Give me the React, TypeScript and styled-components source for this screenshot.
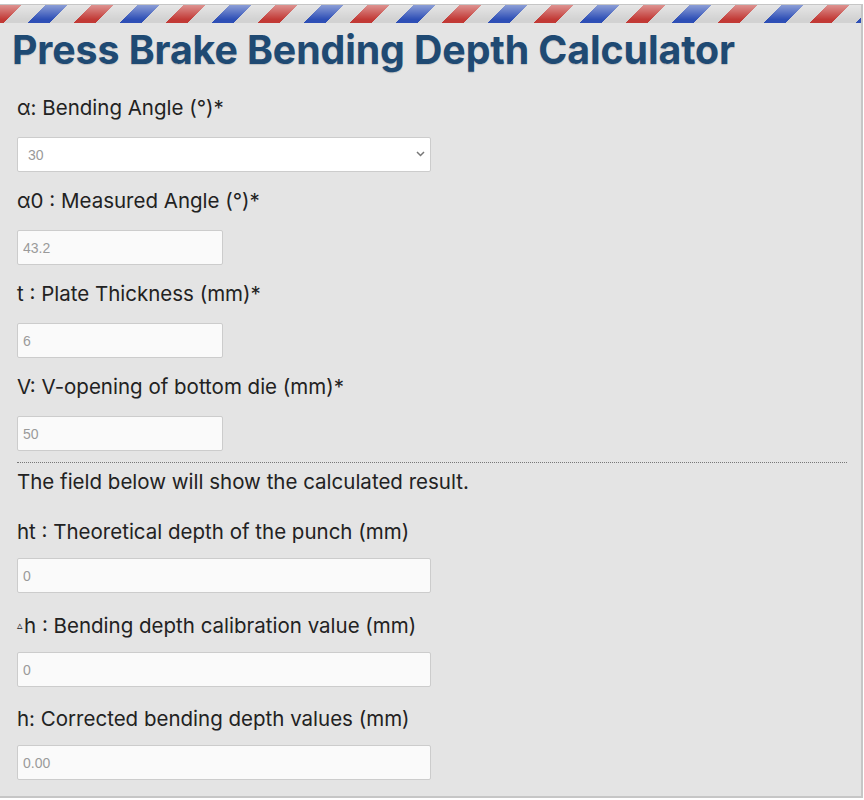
import React from "react";
import styled, { createGlobalStyle } from "styled-components";

const GlobalStyle = createGlobalStyle`
  html, body {
    margin: 0;
    padding: 0;
    background: #ffffff;
  }
  * {
    box-sizing: border-box;
  }
`;

const Calculator = styled.div`
  margin-top: 4px;
  width: 863px;
  height: 794px;
  background: #e4e4e4;
  border-top: 1px solid #c6c6c6;
  border-right: 2px solid #c6c6c6;
  border-bottom: 2px solid #c6c6c6;
  font-family: Inter, "Noto Sans", sans-serif;
  color: #222222;
  overflow: hidden;
`;

const AirmailBand = styled.div`
  height: 18px;
  background:
    linear-gradient(to bottom, rgba(255, 255, 255, 0.45), rgba(255, 255, 255, 0) 80%),
    repeating-linear-gradient(
      135deg,
      #c23a36 0 15.5px,
      #d2d2d2 15.5px 32.5px,
      #2e4fb6 32.5px 48px,
      #d2d2d2 48px 65px
    );
`;

const Body = styled.div`
  padding: 4px 16px 0 17px;
`;

const Title = styled.h1`
  margin: 0 0 21px -5px;
  font-size: 39.3px;
  line-height: 46px;
  font-weight: 700;
  color: #1f4a73;
  letter-spacing: -0.1px;
  text-shadow: 0 1px 1px rgba(0, 0, 0, 0.15);
`;

const Field = styled.div<{ $tight?: boolean }>`
  display: flex;
  flex-direction: column;
  align-items: flex-start;
  gap: ${(p) => (p.$tight ? "12px" : "15px")};
  margin-bottom: ${(p) => (p.$tight ? "18px" : "15px")};
`;

const Label = styled.label`
  display: block;
  font-size: 20.5px;
  line-height: 28px;
  font-weight: 400;
  color: #222222;
`;

const Delta = styled.span`
  font-size: 11px;
  vertical-align: 4px;
  margin-right: 1px;
`;

const TextBox = styled.input<{ $wide?: boolean }>`
  width: ${(p) => (p.$wide ? "414px" : "206px")};
  height: 35px;
  padding: 0 5px;
  border: 1px solid #cccccc;
  border-radius: 2px;
  background: #fafafa;
  font-family: "Liberation Sans", Arial, sans-serif;
  font-size: 14px;
  color: #9a9a9a;
  outline: none;
  &::placeholder {
    color: #9a9a9a;
  }
`;

const SelectWrap = styled.div`
  position: relative;
  width: 414px;
  height: 35px;
`;

const Select = styled.select`
  appearance: none;
  width: 100%;
  height: 100%;
  padding: 0 10px;
  border: 1px solid #cccccc;
  border-radius: 2px;
  background: #ffffff;
  font-family: "Liberation Sans", Arial, sans-serif;
  font-size: 14px;
  color: #9a9a9a;
  outline: none;
`;

const Chevron = styled.svg`
  position: absolute;
  right: 6px;
  top: 14px;
  pointer-events: none;
`;

const Divider = styled.hr`
  margin: -4px 0 5px 0;
  width: 830px;
  border: none;
  border-top: 1px dotted #777777;
`;

const Note = styled.p`
  margin: 0 0 22px 0;
  font-size: 20.5px;
  line-height: 28px;
  color: #222222;
`;

const inputFields = [
  { id: "alpha0", label: "α0 : Measured Angle (°)*", value: "43.2" },
  { id: "t", label: "t : Plate Thickness (mm)*", value: "6" },
  { id: "v", label: "V: V-opening of bottom die (mm)*", value: "50" },
];

export default function App() {
  return (
    <>
      <GlobalStyle />
      <Calculator>
        <AirmailBand />
        <Body>
          <Title>Press Brake Bending Depth Calculator</Title>

          <Field>
            <Label htmlFor="alpha">α: Bending Angle (°)*</Label>
            <SelectWrap>
              <Select id="alpha" defaultValue="30">
                <option value="30">30</option>
                <option value="45">45</option>
                <option value="60">60</option>
                <option value="90">90</option>
              </Select>
              <Chevron width="9" height="6" viewBox="0 0 9 6">
                <path d="M1 1l3.5 3.5L8 1" fill="none" stroke="#777" strokeWidth="1.5" />
              </Chevron>
            </SelectWrap>
          </Field>

          {inputFields.map((f) => (
            <Field key={f.id}>
              <Label htmlFor={f.id}>{f.label}</Label>
              <TextBox id={f.id} placeholder={f.value} />
            </Field>
          ))}

          <Divider />
          <Note>The field below will show the calculated result.</Note>

          <Field $tight>
            <Label htmlFor="ht">ht : Theoretical depth of the punch (mm)</Label>
            <TextBox $wide id="ht" placeholder="0" readOnly />
          </Field>
          <Field $tight>
            <Label htmlFor="dh">
              <Delta>▵</Delta>h : Bending depth calibration value (mm)
            </Label>
            <TextBox $wide id="dh" placeholder="0" readOnly />
          </Field>
          <Field $tight>
            <Label htmlFor="h">h: Corrected bending depth values (mm)</Label>
            <TextBox $wide id="h" placeholder="0.00" readOnly />
          </Field>
        </Body>
      </Calculator>
    </>
  );
}
